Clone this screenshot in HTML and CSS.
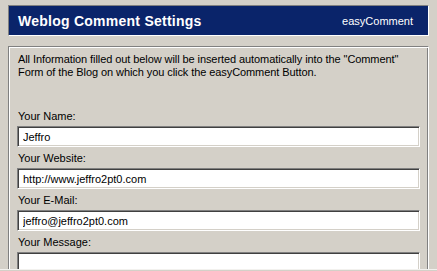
FILE: index.html
```html
<!DOCTYPE html>
<html lang="en">
<head>
    <meta charset="UTF-8">
    <title>Weblog Comment Settings</title>
    <link rel="stylesheet" href="styles.css">
</head>
<body>
    <!-- Title bar -->
    <div class="title-bar">
        <span class="title">Weblog Comment Settings</span>
        <span class="brand">easyComment</span>
    </div>

    <!-- Settings panel -->
    <div class="panel">
        <p class="intro">All Information filled out below will be inserted automatically into the "Comment" Form of the Blog on which you click the easyComment Button.</p>

        <label class="field-label" for="name">Your Name:</label>
        <input class="field" id="name" type="text" value="Jeffro">

        <label class="field-label" for="website">Your Website:</label>
        <input class="field" id="website" type="text" value="http://www.jeffro2pt0.com">

        <label class="field-label" for="email">Your E-Mail:</label>
        <input class="field" id="email" type="text" value="jeffro@jeffro2pt0.com">

        <label class="field-label" for="message">Your Message:</label>
        <textarea class="field message" id="message"></textarea>
    </div>
</body>
</html>
```

FILE: styles.css
```css
/* Win2k style dialog */
html {
    margin: 0;
    padding: 0;
    height: 271px;
    overflow: hidden;
    background-color: #d4d0c8;
}

body {
    margin: 0;
    padding: 0;
    height: 269px;
    overflow: hidden;
    border-bottom: 1px solid #f2f1ee;
    background-color: #d4d0c8;
    font-family: "Liberation Sans", Arial, sans-serif;
    font-size: 11px;
    color: #000;
}

.title-bar {
    margin: 5px 8px 0;
    height: 29px;
    background-color: #0a246a;
    color: #fff;
    border: 1px solid;
    border-color: #808080 #fff #fff #808080;
    display: flex;
    justify-content: space-between;
    align-items: center;
    padding: 0 15px 0 9px;
}

.title {
    font-size: 14px;
    font-weight: bold;
    letter-spacing: 0.25px;
}

.brand {
    font-size: 11px;
}

.panel {
    margin: 10px 8px 0;
    height: 240px;
    border: 1px solid;
    border-color: #808080 #fff #fff #808080;
    box-shadow: inset 1px 1px 0 #fff, inset -1px -1px 0 #808080;
    padding: 6px 8px 0 8px;
}

.intro {
    margin: 0 0 26px 1px;
    line-height: 13px;
    letter-spacing: -0.08px;
}

.field-label {
    display: block;
    padding: 5px 0 3px 1px;
    line-height: 13px;
}

.field {
    display: block;
    box-sizing: border-box;
    width: 100%;
    height: 21px;
    margin: 0;
    padding: 0 5px;
    font-family: inherit;
    font-size: 11px;
    background-color: #fff;
    border: 1px solid;
    border-color: #808080 #fff #fff #808080;
    box-shadow: inset 1px 1px 0 #404040, inset -1px -1px 0 #d4d0c8;
    outline: none;
}

.message {
    height: 60px;
    resize: none;
}
```
